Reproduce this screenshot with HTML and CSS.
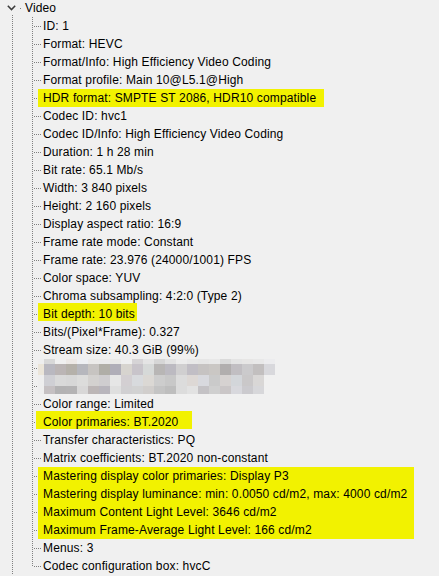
FILE: index.html
```html
<!DOCTYPE html>
<html>
<head>
<meta charset="utf-8">
<link rel="stylesheet" href="styles.css">
</head>
<body>
<div class="tree">
  <div class="root">
    <svg class="chev" width="9" height="6" viewBox="0 0 9 6"><polyline points="0.8,0.8 4.5,4.6 8.2,0.8" fill="none" stroke="#3c3c3c" stroke-width="1.5"/></svg>
    <span class="rootdot"></span>
    <span class="root-label">Video</span>
  </div>
  <div class="children">
    <div class="item"><span class="label">ID: 1</span></div>
    <div class="item"><span class="label">Format: HEVC</span></div>
    <div class="item"><span class="label">Format/Info: High Efficiency Video Coding</span></div>
    <div class="item"><span class="label">Format profile: Main 10@L5.1@High</span></div>
    <div class="item"><span class="label hl w-hdr">HDR format: SMPTE ST 2086, HDR10 compatible</span></div>
    <div class="item"><span class="label">Codec ID: hvc1</span></div>
    <div class="item"><span class="label">Codec ID/Info: High Efficiency Video Coding</span></div>
    <div class="item"><span class="label">Duration: 1 h 28 min</span></div>
    <div class="item"><span class="label">Bit rate: 65.1 Mb/s</span></div>
    <div class="item"><span class="label">Width: 3 840 pixels</span></div>
    <div class="item"><span class="label">Height: 2 160 pixels</span></div>
    <div class="item"><span class="label">Display aspect ratio: 16:9</span></div>
    <div class="item"><span class="label">Frame rate mode: Constant</span></div>
    <div class="item"><span class="label">Frame rate: 23.976 (24000/1001) FPS</span></div>
    <div class="item"><span class="label">Color space: YUV</span></div>
    <div class="item"><span class="label">Chroma subsampling: 4:2:0 (Type 2)</span></div>
    <div class="item"><span class="label hl up w-bit">Bit depth: 10 bits</span></div>
    <div class="item"><span class="label">Bits/(Pixel*Frame): 0.327</span></div>
    <div class="item"><span class="label">Stream size: 40.3 GiB (99%)</span></div>
    <div class="item tall">
      <svg class="mosaic" width="237" height="36" viewBox="0 0 237 36" shape-rendering="crispEdges">
        <g>
          <rect x="0" y="0" width="6" height="5" fill="#eeeeee"/>
          <rect x="6" y="0" width="11" height="5" fill="#d8d8d8"/>
          <rect x="17" y="0" width="11" height="5" fill="#f0f0f0"/>
          <rect x="28" y="0" width="11" height="5" fill="#ede9e6"/>
          <rect x="39" y="0" width="11" height="5" fill="#eef0f3"/>
          <rect x="50" y="0" width="11" height="5" fill="#ecebe9"/>
          <rect x="61" y="0" width="11" height="5" fill="#ebebeb"/>
          <rect x="72" y="0" width="11" height="5" fill="#eae9e7"/>
          <rect x="83" y="0" width="11" height="5" fill="#efefef"/>
          <rect x="94" y="0" width="11" height="5" fill="#d6d4d6"/>
          <rect x="105" y="0" width="11" height="5" fill="#e4e4e4"/>
          <rect x="116" y="0" width="11" height="5" fill="#d6d6d6"/>
          <rect x="127" y="0" width="11" height="5" fill="#e2e2e2"/>
          <rect x="138" y="0" width="11" height="5" fill="#ececec"/>
          <rect x="149" y="0" width="11" height="5" fill="#e8e8e8"/>
          <rect x="160" y="0" width="11" height="5" fill="#e6e6e6"/>
          <rect x="171" y="0" width="11" height="5" fill="#e8e8e8"/>
          <rect x="182" y="0" width="11" height="5" fill="#dadada"/>
          <rect x="193" y="0" width="11" height="5" fill="#e4e4e4"/>
          <rect x="204" y="0" width="11" height="5" fill="#e7e6e5"/>
          <rect x="215" y="0" width="11" height="5" fill="#e8e8e8"/>
          <rect x="226" y="0" width="11" height="5" fill="#ececee"/>
        </g>
        <g>
          <rect x="0" y="5" width="6" height="11" fill="#ebe5d9"/>
          <rect x="6" y="5" width="11" height="11" fill="#b9b8c0"/>
          <rect x="17" y="5" width="11" height="11" fill="#bbb5b5"/>
          <rect x="28" y="5" width="11" height="11" fill="#b5b1aa"/>
          <rect x="39" y="5" width="11" height="11" fill="#b6b7bd"/>
          <rect x="50" y="5" width="11" height="11" fill="#c7c4c1"/>
          <rect x="61" y="5" width="11" height="11" fill="#b0aea7"/>
          <rect x="72" y="5" width="11" height="11" fill="#b0aeb8"/>
          <rect x="83" y="5" width="11" height="11" fill="#d7d4cf"/>
          <rect x="94" y="5" width="11" height="11" fill="#c8c4ca"/>
          <rect x="105" y="5" width="11" height="11" fill="#d6d9d8"/>
          <rect x="116" y="5" width="11" height="11" fill="#b8b6b5"/>
          <rect x="127" y="5" width="11" height="11" fill="#bcbac1"/>
          <rect x="138" y="5" width="11" height="11" fill="#d0cfd0"/>
          <rect x="149" y="5" width="11" height="11" fill="#c1bec5"/>
          <rect x="160" y="5" width="11" height="11" fill="#c6c3c2"/>
          <rect x="171" y="5" width="11" height="11" fill="#cac7c4"/>
          <rect x="182" y="5" width="11" height="11" fill="#b1aeae"/>
          <rect x="193" y="5" width="11" height="11" fill="#c1bec2"/>
          <rect x="204" y="5" width="11" height="11" fill="#cbcacc"/>
          <rect x="215" y="5" width="11" height="11" fill="#c2bfbf"/>
          <rect x="226" y="5" width="11" height="11" fill="#d8d8dc"/>
        </g>
        <g>
          <rect x="0" y="16" width="6" height="11" fill="#eeeeee"/>
          <rect x="6" y="16" width="11" height="11" fill="#cfcfd4"/>
          <rect x="17" y="16" width="11" height="11" fill="#d9d9d9"/>
          <rect x="28" y="16" width="11" height="11" fill="#d7d7d7"/>
          <rect x="39" y="16" width="11" height="11" fill="#dcdcdb"/>
          <rect x="50" y="16" width="11" height="11" fill="#d3d1cf"/>
          <rect x="61" y="16" width="11" height="11" fill="#cfcdcf"/>
          <rect x="72" y="16" width="11" height="11" fill="#e6e6e6"/>
          <rect x="83" y="16" width="11" height="11" fill="#d3cfd2"/>
          <rect x="94" y="16" width="11" height="11" fill="#d8dadd"/>
          <rect x="105" y="16" width="11" height="11" fill="#dbd8d4"/>
          <rect x="116" y="16" width="11" height="11" fill="#cdcdcd"/>
          <rect x="127" y="16" width="11" height="11" fill="#c8c8c8"/>
          <rect x="138" y="16" width="11" height="11" fill="#dcdcdc"/>
          <rect x="149" y="16" width="11" height="11" fill="#ddd8d5"/>
          <rect x="160" y="16" width="11" height="11" fill="#d8d9de"/>
          <rect x="171" y="16" width="11" height="11" fill="#cacaca"/>
          <rect x="182" y="16" width="11" height="11" fill="#d6d2d1"/>
          <rect x="193" y="16" width="11" height="11" fill="#d3d6da"/>
          <rect x="204" y="16" width="11" height="11" fill="#cac8c9"/>
          <rect x="215" y="16" width="11" height="11" fill="#d9d7d6"/>
        </g>
        <g>
          <rect x="0" y="27" width="6" height="8" fill="#eeeeee"/>
          <rect x="6" y="27" width="11" height="8" fill="#c5c0c2"/>
          <rect x="17" y="27" width="11" height="8" fill="#b3b2b3"/>
          <rect x="28" y="27" width="11" height="8" fill="#b4b3b4"/>
          <rect x="39" y="27" width="11" height="8" fill="#d8d7d7"/>
          <rect x="50" y="27" width="11" height="8" fill="#bcb6b6"/>
          <rect x="61" y="27" width="11" height="8" fill="#b8b5bc"/>
          <rect x="72" y="27" width="11" height="8" fill="#dfdfdf"/>
          <rect x="83" y="27" width="11" height="8" fill="#d1d0d2"/>
          <rect x="94" y="27" width="11" height="8" fill="#d2d2d2"/>
          <rect x="105" y="27" width="11" height="8" fill="#d1cecc"/>
          <rect x="116" y="27" width="11" height="8" fill="#c4c4c4"/>
          <rect x="127" y="27" width="11" height="8" fill="#bebebe"/>
          <rect x="138" y="27" width="11" height="8" fill="#dcdcdc"/>
          <rect x="149" y="27" width="11" height="8" fill="#e2e2e2"/>
          <rect x="160" y="27" width="11" height="8" fill="#c4c2c5"/>
          <rect x="171" y="27" width="11" height="8" fill="#cfcfcf"/>
          <rect x="182" y="27" width="11" height="8" fill="#cac6c7"/>
          <rect x="193" y="27" width="11" height="8" fill="#d8d8dd"/>
          <rect x="204" y="27" width="11" height="8" fill="#cbcace"/>
          <rect x="215" y="27" width="11" height="8" fill="#d7d7da"/>
        </g>
      </svg>
    </div>
    <div class="item"><span class="label">Color range: Limited</span></div>
    <div class="item"><span class="label hl up w-prim">Color primaries: BT.2020</span></div>
    <div class="item"><span class="label">Transfer characteristics: PQ</span></div>
    <div class="item"><span class="label">Matrix coefficients: BT.2020 non-constant</span></div>
    <div class="item"><span class="label hl w-grp">Mastering display color primaries: Display P3</span></div>
    <div class="item"><span class="label hl w-grp">Mastering display luminance: min: 0.0050 cd/m2, max: 4000 cd/m2</span></div>
    <div class="item"><span class="label hl w-grp">Maximum Content Light Level: 3646 cd/m2</span></div>
    <div class="item"><span class="label hl w-grp">Maximum Frame-Average Light Level: 166 cd/m2</span></div>
    <div class="item"><span class="label">Menus: 3</span></div>
    <div class="item last"><span class="label">Codec configuration box: hvcC</span></div>
  </div>
</div>
</body>
</html>
```
FILE: styles.css
```css
html, body {
  margin: 0;
  padding: 0;
}
body {
  background: #f0f0f0;
  font-family: "Liberation Sans", Arial, sans-serif;
  font-size: 12px;
  letter-spacing: 0.14px;
  color: #000;
  overflow: hidden;
  height: 576px;
}
.tree {
  margin-top: -1px;
}
.root {
  height: 18px;
  display: flex;
  align-items: center;
  padding-left: 7px;
  background: repeating-linear-gradient(to bottom, #808080 0 1px, transparent 1px 2px) 12px 16px / 1px 2px no-repeat;
}
.chev {
  display: block;
  width: 9px;
  height: 6px;
  flex: none;
}
.rootdot {
  width: 1px;
  height: 1px;
  background: #808080;
  margin-left: 4px;
  flex: none;
}
.root-label {
  margin-left: 4px;
  line-height: 18px;
  white-space: nowrap;
}
.children {
  background: repeating-linear-gradient(to bottom, #808080 0 1px, transparent 1px 2px) 12px 0 / 1px 100% no-repeat;
}
.item {
  height: 18px;
  display: flex;
  padding-left: 38px;
  background:
    repeating-linear-gradient(to right, #808080 0 1px, transparent 1px 2px) 34px 9px / 7px 1px no-repeat,
    repeating-linear-gradient(to bottom, #808080 0 1px, transparent 1px 2px) 32px 0 / 1px 100% no-repeat;
}
.item.last {
  background:
    repeating-linear-gradient(to right, #808080 0 1px, transparent 1px 2px) 34px 9px / 7px 1px no-repeat,
    repeating-linear-gradient(to bottom, #808080 0 1px, transparent 1px 2px) 32px 0 / 1px 10px no-repeat;
}
.item.tall {
  height: 36px;
  background:
    repeating-linear-gradient(to right, #808080 0 1px, transparent 1px 2px) 34px 9px / 7px 1px no-repeat,
    repeating-linear-gradient(to right, #808080 0 1px, transparent 1px 2px) 34px 27px / 7px 1px no-repeat,
    repeating-linear-gradient(to bottom, #808080 0 1px, transparent 1px 2px) 32px 0 / 1px 100% no-repeat;
}
.mosaic {
  display: block;
}
.label {
  display: block;
  box-sizing: border-box;
  height: 18px;
  line-height: 18px;
  padding: 0 5px;
  white-space: nowrap;
}
.hl {
  background: #f2f200;
}
.up {
  margin-top: -2px;
  padding-top: 2px;
}
.w-hdr {
  width: 286px;
}
.w-bit {
  width: 99px;
}
.w-prim {
  margin-left: -2px;
  padding-left: 7px;
  width: 156px;
}
.w-grp {
  width: 376px;
}
```
